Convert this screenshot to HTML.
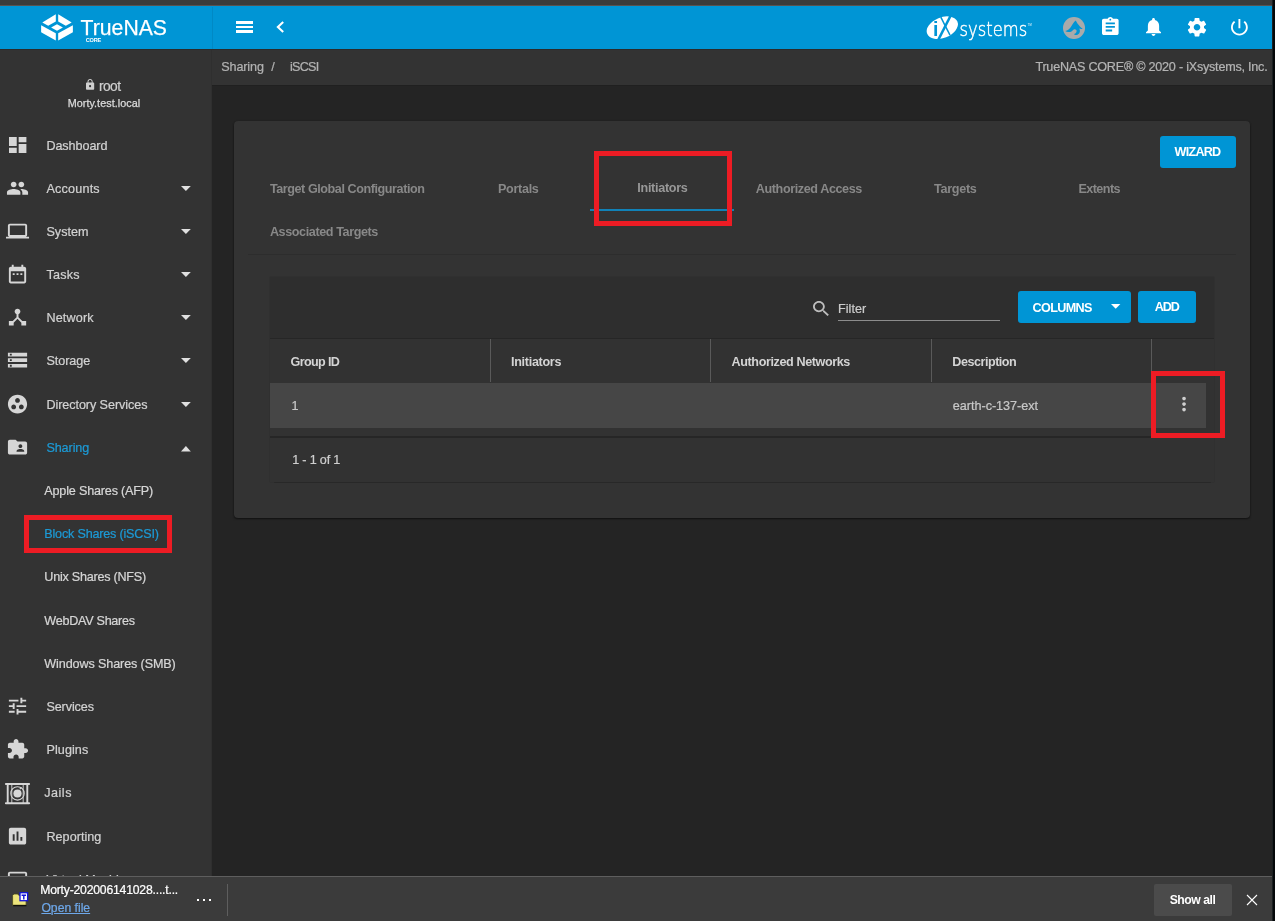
<!DOCTYPE html>
<html lang="en"><head><meta charset="utf-8"><title>TrueNAS - iSCSI Initiators</title>
<style>
html,body{margin:0;padding:0;}
body{width:1275px;height:921px;overflow:hidden;background:#242424;position:relative;font-family:"Liberation Sans",sans-serif;}
#app{position:absolute;left:0;top:0;width:1275px;height:921px;overflow:hidden;will-change:transform;}
header,nav,aside,main,footer{display:contents;}
.b{position:absolute;box-sizing:border-box;}
.t{position:absolute;white-space:nowrap;}
.i{position:absolute;display:block;overflow:visible;}
</style></head><body>
<div id="app">
<div class="b" style="left:0px;top:0px;width:1275px;height:921px;background:#242424;"></div>
<div class="b" style="left:212px;top:49px;width:1063px;height:36px;background:#333333;"></div>
<div class="b" style="left:0px;top:49px;width:212px;height:830px;background:#333333;"></div>
<div class="b" style="left:211px;top:49px;width:1px;height:827px;background:#2f2f2f;"></div>
<div class="b" style="left:212px;top:85px;width:1063px;height:1px;background:#202020;"></div>
<header aria-label="Top bar">
<div class="b" style="left:0px;top:0px;width:1275px;height:6px;background:#3b3b3b;"></div>
<div class="b" style="left:0px;top:5px;width:1275px;height:1px;background:#5a5250;"></div>
<div class="b" style="left:0px;top:6px;width:1275px;height:43px;background:#0095d5;"></div>
<div class="b" style="left:212px;top:7px;width:1px;height:42px;background:#0089c5;"></div>
<div class="b" style="left:0px;top:49px;width:1275px;height:1px;background:#2b2b2b;"></div>
<svg class="i" style="left:38px;top:10px" width="40" height="34" viewBox="38 10 40 34"><g fill="#fff"><polygon points="42.3,22.6 55.8,14.3 55.8,21.6 48.2,25.8"/><polygon points="58.2,14.3 71.7,22.6 65.8,25.8 58.2,21.6"/><polygon points="51.1,27.5 57,24.2 62.9,27.5 57,30.8"/><polygon points="41.1,25.2 55.8,33.3 55.8,40.6 41.1,32.2"/><polygon points="58.2,33.3 72.9,25.2 72.9,32.2 58.2,40.6"/></g></svg>
<svg class="i" style="left:78px;top:10px" width="100" height="38" viewBox="78 10 100 38"><text x="80.6" y="34.5" font-family="Liberation Sans, sans-serif" font-size="22.8" fill="#fff" stroke="#fff" stroke-width=".25" textLength="86.4" lengthAdjust="spacingAndGlyphs">TrueNAS</text><text x="85.8" y="42" font-family="Liberation Sans, sans-serif" font-weight="700" font-size="5.6" fill="#fff" textLength="15.4" lengthAdjust="spacing">CORE</text></svg>
<div class="b" style="left:236px;top:21.1px;width:17.1px;height:2.5px;background:#fff;"></div>
<div class="b" style="left:236px;top:26.05px;width:17.1px;height:2.05px;background:#fff;"></div>
<div class="b" style="left:236px;top:30.35px;width:17.1px;height:2.5px;background:#fff;"></div>
<svg class="i" style="left:274px;top:19px" width="14" height="16" viewBox="274 19 14 16"><path d="M283.2 22.1L277.9 27L283.2 31.9" fill="none" stroke="#fff" stroke-width="2.1"/></svg>
<svg class="i" style="left:920px;top:10px" width="120" height="36" viewBox="920 10 120 36"><ellipse cx="942.3" cy="27.700" rx="16.300" ry="10.300" transform="rotate(-22 942.3 27.700)" fill="#fff"/><path d="M950.600 15.800L938.400 39.600" stroke="#0095d5" stroke-width="2.500" fill="none"/><path d="M940.800 17.200L950.000 35.200" stroke="#0095d5" stroke-width="1.500" fill="none"/><text x="933.000" y="35.600" font-family="Liberation Sans, sans-serif" font-weight="700" font-size="19.5" fill="#0095d5">i</text><text x="959.600" y="35.600" font-family="DejaVu Sans Light, DejaVu Sans, sans-serif" font-weight="200" font-size="19.6" fill="#fff" stroke="#fff" stroke-width=".45" textLength="67.600" lengthAdjust="spacingAndGlyphs">systems</text><text x="1027.800" y="26.000" font-family="Liberation Sans, sans-serif" font-size="2.6" fill="#fff">TM</text></svg>
<svg class="i" style="left:1062px;top:16px" width="24" height="24" viewBox="0 0 24 24"><circle cx="12" cy="12" r="11" fill="#aaaaaa"/><path d="M3.200 14.900C5.500 14.600 7.800 12.600 9.500 9.900C10.600 8.200 12.000 5.800 13.900 4.600C14.600 6.300 15.200 7.300 16.100 8.300C17.000 9.600 18.600 11.600 20.700 12.700C19.600 13.200 18.400 13.100 17.200 12.600C17.900 13.800 18.100 15.000 17.700 16.200C17.300 17.600 16.200 18.700 14.400 19.000C13.400 19.100 12.500 18.600 11.900 17.900C12.600 17.800 13.300 17.500 13.800 16.900C14.600 16.200 14.900 15.100 14.300 14.100C13.700 13.100 12.500 13.000 11.700 13.500C10.900 14.200 10.300 14.900 9.500 15.400C8.500 15.900 7.300 16.100 6.200 16.000C5.100 15.900 4.000 15.500 3.200 14.900Z" fill="#0095d5"/></svg>
<svg class="i" style="left:1102.10px;top:17.30px;" width="16.60" height="18.00" viewBox="3 1 18 20" preserveAspectRatio="none"><path fill="#fff" d="M19 3h-4.18C14.4 1.84 13.3 1 12 1c-1.3 0-2.4.84-2.82 2H5c-1.1 0-2 .9-2 2v14c0 1.1.9 2 2 2h14c1.1 0 2-.9 2-2V5c0-1.1-.9-2-2-2zm-7 0c.55 0 1 .45 1 1s-.45 1-1 1-1-.45-1-1 .45-1 1-1zm2 14H7v-2h7v2zm3-4H7v-2h10v2zm0-4H7V7h10v2z"/></svg>
<svg class="i" style="left:1146.00px;top:18.20px;" width="15.00" height="17.90" viewBox="4 2.5 16 19.5" preserveAspectRatio="none"><path fill="#fff" d="M12 22c1.1 0 2-.9 2-2h-4c0 1.1.89 2 2 2zm6-6v-5c0-3.07-1.64-5.64-4.5-6.32V4c0-.83-.67-1.5-1.5-1.5s-1.5.67-1.5 1.5v.68C7.63 5.36 6 7.92 6 11v5l-2 2v1h16v-1l-2-2z"/></svg>
<svg class="i" style="left:1187.80px;top:17.80px;" width="18.00" height="18.40" viewBox="2.4 2 19.200000000000003 20" preserveAspectRatio="none"><path fill="#fff" d="M19.43 12.98c.04-.32.07-.64.07-.98s-.03-.66-.07-.98l2.11-1.65c.19-.15.24-.42.12-.64l-2-3.46c-.12-.22-.39-.3-.61-.22l-2.49 1c-.52-.4-1.08-.73-1.69-.98l-.38-2.65C14.46 2.18 14.25 2 14 2h-4c-.25 0-.46.18-.49.42l-.38 2.65c-.61.25-1.17.59-1.69.98l-2.49-1c-.23-.09-.49 0-.61.22l-2 3.46c-.13.22-.07.49.12.64l2.11 1.65c-.04.32-.07.65-.07.98s.03.66.07.98l-2.11 1.65c-.19.15-.24.42-.12.64l2 3.46c.12.22.39.3.61.22l2.49-1c.52.4 1.08.73 1.69.98l.38 2.65c.03.24.24.42.49.42h4c.25 0 .46-.18.49-.42l.38-2.65c.61-.25 1.17-.59 1.69-.98l2.49 1c.23.09.49 0 .61-.22l2-3.46c.12-.22.07-.49-.12-.64l-2.11-1.65zM12 15.5c-1.93 0-3.5-1.57-3.5-3.5s1.57-3.5 3.5-3.5 3.5 1.57 3.5 3.5-1.57 3.5-3.5 3.5z"/></svg>
<svg class="i" style="left:1231.40px;top:18.90px;" width="16.80" height="16.50" viewBox="3 3 18 18" preserveAspectRatio="none"><path fill="#fff" d="M13 3h-2v10h2V3zm4.83 2.17l-1.42 1.42C17.99 7.86 19 9.81 19 12c0 3.87-3.13 7-7 7s-7-3.13-7-7c0-2.19 1.01-4.14 2.58-5.42L6.17 5.17C4.23 6.82 3 9.26 3 12c0 4.97 4.03 9 9 9s9-4.03 9-9c0-2.74-1.23-5.18-3.17-6.83z"/></svg>
</header>
<nav aria-label="Breadcrumb">
<div class="t" style="left:221.20px;top:58px;font-size:12.6px;line-height:19px;color:#b2b2b2;font-weight:400;letter-spacing:-0.105px;-webkit-text-stroke:0.22px #b2b2b2;">Sharing</div>
<div class="t" style="left:271.20px;top:58px;font-size:12.6px;line-height:19px;color:#b2b2b2;font-weight:400;letter-spacing:0.000px;-webkit-text-stroke:0.22px #b2b2b2;">/</div>
<div class="t" style="left:289.90px;top:58px;font-size:12.6px;line-height:19px;color:#b2b2b2;font-weight:400;letter-spacing:-0.702px;-webkit-text-stroke:0.22px #b2b2b2;">iSCSI</div>
<div class="t" style="left:1035.40px;top:58px;font-size:12.6px;line-height:19px;color:#b4b4b4;font-weight:400;letter-spacing:-0.226px;-webkit-text-stroke:0.22px #b4b4b4;">TrueNAS CORE® © 2020 - iXsystems, Inc.</div>
</nav>
<aside aria-label="Navigation">
<svg class="i" style="left:85.90px;top:79.40px;" width="8.20" height="10.70" viewBox="4 1 16 21" preserveAspectRatio="none"><path fill="#d0d0d0" d="M18 8h-1V6c0-2.76-2.24-5-5-5S7 3.24 7 6v2H6c-1.1 0-2 .9-2 2v10c0 1.1.9 2 2 2h12c1.1 0 2-.9 2-2V10c0-1.1-.9-2-2-2zm-6 9c-1.1 0-2-.9-2-2s.9-2 2-2 2 .9 2 2-.9 2-2 2zm3.1-9H8.9V6c0-1.71 1.39-3.1 3.1-3.1 1.71 0 3.1 1.39 3.1 3.1v2z"/></svg>
<div class="t" style="left:98.90px;top:76px;font-size:13.8px;line-height:22px;color:#cfcfcf;font-weight:400;letter-spacing:-0.527px;-webkit-text-stroke:0.22px #cfcfcf;">root</div>
<div class="t" style="left:67.70px;top:95px;font-size:10.8px;line-height:16px;color:#dcdcdc;font-weight:400;letter-spacing:0.039px;-webkit-text-stroke:0.25px #dcdcdc;">Morty.test.local</div>
<div class="t" style="left:46.40px;top:137px;font-size:12.6px;line-height:19px;color:#d2d2d2;font-weight:400;letter-spacing:-0.068px;-webkit-text-stroke:0.22px #d2d2d2;">Dashboard</div>
<svg class="i" style="left:9.20px;top:136.90px;" width="17.40" height="16.00" viewBox="3 3 18 18" preserveAspectRatio="none"><path fill="#d6d6d6" d="M3 13h8V3H3v10zm0 8h8v-6H3v6zm10 0h8V11h-8v10zm0-18v6h8V3h-8z"/></svg>
<div class="t" style="left:46.40px;top:180px;font-size:12.6px;line-height:19px;color:#d2d2d2;font-weight:400;letter-spacing:0.210px;-webkit-text-stroke:0.22px #d2d2d2;">Accounts</div>
<svg class="i" style="left:5.88px;top:176.84px;" width="23.04" height="22.32" viewBox="0 0 24 24" preserveAspectRatio="none"><path fill="#d6d6d6" d="M16 11c1.66 0 2.99-1.34 2.99-3S17.66 5 16 5c-1.66 0-3 1.34-3 3s1.34 3 3 3zm-8 0c1.66 0 2.99-1.34 2.99-3S9.66 5 8 5C6.34 5 5 6.34 5 8s1.34 3 3 3zm0 2c-2.33 0-7 1.17-7 3.5V19h14v-2.5c0-2.33-4.67-3.5-7-3.5zm8 0c-.29 0-.62.02-.97.05 1.16.84 1.97 1.97 1.97 3.45V19h6v-2.5c0-2.33-4.67-3.5-7-3.5z"/></svg>
<svg class="i" style="left:181.10px;top:186.20px;" width="9.80" height="5.00" viewBox="7 10 10 5" preserveAspectRatio="none"><path fill="#e0e0e0" d="M7 10l5 5 5-5z"/></svg>
<div class="t" style="left:46.40px;top:223px;font-size:12.6px;line-height:19px;color:#d2d2d2;font-weight:400;letter-spacing:0.038px;-webkit-text-stroke:0.22px #d2d2d2;">System</div>
<svg class="i" style="left:5.88px;top:219.84px;" width="23.04" height="22.32" viewBox="0 0 24 24" preserveAspectRatio="none"><path fill="#d6d6d6" d="M20 18c1.1 0 1.99-.9 1.99-2L22 6c0-1.1-.9-2-2-2H4c-1.1 0-2 .9-2 2v10c0 1.1.9 2 2 2H0v2h24v-2h-4zM4 6h16v10H4V6z"/></svg>
<svg class="i" style="left:181.10px;top:229.20px;" width="9.80" height="5.00" viewBox="7 10 10 5" preserveAspectRatio="none"><path fill="#e0e0e0" d="M7 10l5 5 5-5z"/></svg>
<div class="t" style="left:46.40px;top:266px;font-size:12.6px;line-height:19px;color:#d2d2d2;font-weight:400;letter-spacing:0.248px;-webkit-text-stroke:0.22px #d2d2d2;">Tasks</div>
<svg class="i" style="left:5.88px;top:262.84px;" width="23.04" height="22.32" viewBox="0 0 24 24" preserveAspectRatio="none"><path fill="#d6d6d6" d="M9 11H7v2h2v-2zm4 0h-2v2h2v-2zm4 0h-2v2h2v-2zm2-7h-1V2h-2v2H8V2H6v2H5c-1.11 0-1.99.9-1.99 2L3 20c0 1.1.89 2 2 2h14c1.1 0 2-.9 2-2V6c0-1.1-.9-2-2-2zm0 16H5V9h14v11z"/></svg>
<svg class="i" style="left:181.10px;top:272.20px;" width="9.80" height="5.00" viewBox="7 10 10 5" preserveAspectRatio="none"><path fill="#e0e0e0" d="M7 10l5 5 5-5z"/></svg>
<div class="t" style="left:46.40px;top:309px;font-size:12.6px;line-height:19px;color:#d2d2d2;font-weight:400;letter-spacing:0.165px;-webkit-text-stroke:0.22px #d2d2d2;">Network</div>
<svg class="i" style="left:5.88px;top:305.84px;" width="23.04" height="22.32" viewBox="0 0 24 24" preserveAspectRatio="none"><path fill="#d6d6d6" d="M17 16l-4-4V8.82C14.16 8.4 15 7.3 15 6c0-1.66-1.34-3-3-3S9 4.34 9 6c0 1.3.84 2.4 2 2.82V12l-4 4H3v5h5v-3.05l4-4.2 4 4.2V21h5v-5h-4z"/></svg>
<svg class="i" style="left:181.10px;top:315.20px;" width="9.80" height="5.00" viewBox="7 10 10 5" preserveAspectRatio="none"><path fill="#e0e0e0" d="M7 10l5 5 5-5z"/></svg>
<div class="t" style="left:46.40px;top:352px;font-size:12.6px;line-height:19px;color:#d2d2d2;font-weight:400;letter-spacing:-0.039px;-webkit-text-stroke:0.22px #d2d2d2;">Storage</div>
<svg class="i" style="left:5.88px;top:348.84px;" width="23.04" height="22.32" viewBox="0 0 24 24" preserveAspectRatio="none"><path fill="#d6d6d6" d="M2 20h20v-4H2v4zm2-3h2v2H4v-2zM2 4v4h20V4H2zm4 3H4V5h2v2zm-4 7h20v-4H2v4zm2-3h2v2H4v-2z"/></svg>
<svg class="i" style="left:181.10px;top:358.20px;" width="9.80" height="5.00" viewBox="7 10 10 5" preserveAspectRatio="none"><path fill="#e0e0e0" d="M7 10l5 5 5-5z"/></svg>
<div class="t" style="left:46.40px;top:396px;font-size:12.6px;line-height:19px;color:#d2d2d2;font-weight:400;letter-spacing:-0.066px;-webkit-text-stroke:0.22px #d2d2d2;">Directory Services</div>
<svg class="i" style="left:5.88px;top:392.84px;" width="23.04" height="22.32" viewBox="0 0 24 24" preserveAspectRatio="none"><path fill="#d6d6d6" d="M12 2C6.48 2 2 6.48 2 12s4.48 10 10 10 10-4.48 10-10S17.52 2 12 2zM8 17.5c-1.38 0-2.5-1.12-2.5-2.5s1.12-2.5 2.5-2.5 2.5 1.12 2.5 2.5-1.12 2.5-2.5 2.5zM9.5 8c0-1.38 1.12-2.5 2.5-2.5s2.5 1.12 2.5 2.5-1.12 2.5-2.5 2.5S9.5 9.38 9.5 8zm6.5 9.5c-1.38 0-2.5-1.12-2.5-2.5s1.12-2.5 2.5-2.5 2.5 1.12 2.5 2.5-1.12 2.5-2.5 2.5z"/></svg>
<svg class="i" style="left:181.10px;top:402.20px;" width="9.80" height="5.00" viewBox="7 10 10 5" preserveAspectRatio="none"><path fill="#e0e0e0" d="M7 10l5 5 5-5z"/></svg>
<div class="t" style="left:46.40px;top:439px;font-size:12.6px;line-height:19px;color:#1c9ad6;font-weight:400;letter-spacing:-0.089px;-webkit-text-stroke:0.22px #1c9ad6;">Sharing</div>
<svg class="i" style="left:5.88px;top:435.84px;" width="23.04" height="22.32" viewBox="0 0 24 24" preserveAspectRatio="none"><path fill="#d6d6d6" d="M20 6h-8l-2-2H4c-1.1 0-1.99.9-1.99 2L2 18c0 1.1.9 2 2 2h16c1.1 0 2-.9 2-2V8c0-1.1-.9-2-2-2zm-5 3c1.1 0 2 .9 2 2s-.9 2-2 2-2-.9-2-2 .9-2 2-2zm4 8h-8v-1c0-1.33 2.67-2 4-2s4 .67 4 2v1z"/></svg>
<svg class="i" style="left:181.10px;top:445.80px;" width="9.80" height="5.40" viewBox="7 9 10 5" preserveAspectRatio="none"><path fill="#e0e0e0" d="M7 14l5-5 5 5z"/></svg>
<div class="t" style="left:44.30px;top:482px;font-size:12.6px;line-height:19px;color:#d6d6d6;font-weight:400;letter-spacing:-0.179px;-webkit-text-stroke:0.22px #d6d6d6;">Apple Shares (AFP)</div>
<div class="t" style="left:44.30px;top:525px;font-size:12.6px;line-height:19px;color:#1c9ad6;font-weight:400;letter-spacing:-0.192px;-webkit-text-stroke:0.22px #1c9ad6;">Block Shares (iSCSI)</div>
<div class="t" style="left:44.30px;top:568px;font-size:12.6px;line-height:19px;color:#d6d6d6;font-weight:400;letter-spacing:-0.239px;-webkit-text-stroke:0.22px #d6d6d6;">Unix Shares (NFS)</div>
<div class="t" style="left:44.30px;top:612px;font-size:12.6px;line-height:19px;color:#d6d6d6;font-weight:400;letter-spacing:-0.273px;-webkit-text-stroke:0.22px #d6d6d6;">WebDAV Shares</div>
<div class="t" style="left:44.30px;top:655px;font-size:12.6px;line-height:19px;color:#d6d6d6;font-weight:400;letter-spacing:-0.113px;-webkit-text-stroke:0.22px #d6d6d6;">Windows Shares (SMB)</div>
<div class="t" style="left:46.40px;top:698px;font-size:12.6px;line-height:19px;color:#d2d2d2;font-weight:400;letter-spacing:-0.102px;-webkit-text-stroke:0.22px #d2d2d2;">Services</div>
<svg class="i" style="left:5.88px;top:694.84px;" width="23.04" height="22.32" viewBox="0 0 24 24" preserveAspectRatio="none"><path fill="#d6d6d6" d="M3 17v2h6v-2H3zM3 5v2h10V5H3zm10 16v-2h8v-2h-8v-2h-2v6h2zM7 9v2H3v2h4v2h2V9H7zm14 4v-2H11v2h10zm-6-4h2V7h4V5h-4V3h-2v6z"/></svg>
<div class="t" style="left:46.40px;top:741px;font-size:12.6px;line-height:19px;color:#d2d2d2;font-weight:400;letter-spacing:0.095px;-webkit-text-stroke:0.22px #d2d2d2;">Plugins</div>
<svg class="i" style="left:5.88px;top:737.84px;" width="23.04" height="22.32" viewBox="0 0 24 24" preserveAspectRatio="none"><path fill="#d6d6d6" d="M20.5 11H19V7c0-1.1-.9-2-2-2h-4V3.5C13 2.12 11.88 1 10.5 1S8 2.12 8 3.5V5H4c-1.1 0-1.99.9-1.99 2v3.8H3.5c1.49 0 2.7 1.21 2.7 2.7s-1.21 2.7-2.7 2.7H2V20c0 1.1.9 2 2 2h3.8v-1.5c0-1.49 1.21-2.7 2.7-2.7 1.49 0 2.7 1.21 2.7 2.7V22H17c1.1 0 2-.9 2-2v-4h1.5c1.38 0 2.5-1.12 2.5-2.5S21.88 11 20.5 11z"/></svg>
<div class="t" style="left:44.20px;top:784px;font-size:12.6px;line-height:19px;color:#d2d2d2;font-weight:400;letter-spacing:0.523px;-webkit-text-stroke:0.22px #d2d2d2;">Jails</div>
<svg class="i" style="left:5.1px;top:782.7px" width="25" height="21.4" viewBox="0 0 25 21.4"><g fill="none" stroke="#d6d6d6"><path d="M.9 1.100H24.100M.9 20.200H24.100" stroke-width="2" stroke-linecap="round"/><path d="M2.700 1V20.400M22.300 1V20.400" stroke-width="1.9"/><path d="M6.800 1V20.400M18.200 1V20.400" stroke-width=".9"/><circle cx="12.5" cy="10.400" r="6.700" stroke-width="1.100"/><path d="M14.800 6.200L16.600 4.400" stroke-width="1.200"/></g><circle cx="12.5" cy="10.500" r="4.100" fill="#d6d6d6"/></svg>
<div class="t" style="left:46.40px;top:828px;font-size:12.6px;line-height:19px;color:#d2d2d2;font-weight:400;letter-spacing:0.046px;-webkit-text-stroke:0.22px #d2d2d2;">Reporting</div>
<svg class="i" style="left:5.88px;top:824.84px;" width="23.04" height="22.32" viewBox="0 0 24 24" preserveAspectRatio="none"><path fill="#d6d6d6" d="M19 3H5c-1.1 0-2 .9-2 2v14c0 1.1.9 2 2 2h14c1.1 0 2-.9 2-2V5c0-1.1-.9-2-2-2zM9 17H7v-7h2v7zm4 0h-2V7h2v10zm4 0h-2v-4h2v4z"/></svg>
<div class="t" style="left:46.40px;top:871px;font-size:12.6px;line-height:19px;color:#d2d2d2;font-weight:400;letter-spacing:-0.008px;-webkit-text-stroke:0.22px #d2d2d2;">Virtual Machines</div>
<svg class="i" style="left:5.88px;top:867.84px;" width="23.04" height="22.32" viewBox="0 0 24 24" preserveAspectRatio="none"><path fill="#d6d6d6" d="M20 18c1.1 0 2-.9 2-2V6c0-1.1-.9-2-2-2H4c-1.1 0-2 .9-2 2v10c0 1.1.9 2 2 2H0v2h24v-2h-4zM4 6h16v10H4V6z"/></svg>
<div class="b" style="left:24.1px;top:515.1px;width:138px;height:27.8px;border:5px solid #ed1c24;box-sizing:content-box"></div>
</aside>
<main>
<div class="b" style="left:234px;top:121px;width:1015.5px;height:397px;background:#333333;border-radius:4px;box-shadow:0 1.5px 2px -0.5px rgba(0,0,0,.5),0 0 1.5px rgba(0,0,0,.3);"></div>
<div class="b" style="left:1160.2px;top:136px;width:75.7px;height:31.8px;background:#0095d5;border-radius:3px;"></div>
<div class="t" style="left:1174.60px;top:143px;font-size:12.6px;line-height:19px;color:#fff;font-weight:700;letter-spacing:-0.758px;">WIZARD</div>
<div class="t" style="left:269.90px;top:180px;font-size:12.6px;line-height:19px;color:#888888;font-weight:700;letter-spacing:-0.433px;">Target Global Configuration</div>
<div class="t" style="left:498.00px;top:180px;font-size:12.6px;line-height:19px;color:#888888;font-weight:700;letter-spacing:-0.303px;">Portals</div>
<div class="t" style="left:637.30px;top:179px;font-size:12.6px;line-height:19px;color:#989898;font-weight:700;letter-spacing:-0.301px;">Initiators</div>
<div class="t" style="left:755.80px;top:180px;font-size:12.6px;line-height:19px;color:#888888;font-weight:700;letter-spacing:-0.398px;">Authorized Access</div>
<div class="t" style="left:934.00px;top:180px;font-size:12.6px;line-height:19px;color:#888888;font-weight:700;letter-spacing:-0.280px;">Targets</div>
<div class="t" style="left:1078.40px;top:180px;font-size:12.6px;line-height:19px;color:#888888;font-weight:700;letter-spacing:-0.553px;">Extents</div>
<div class="t" style="left:269.90px;top:223px;font-size:12.6px;line-height:19px;color:#888888;font-weight:700;letter-spacing:-0.401px;">Associated Targets</div>
<div class="b" style="left:590.2px;top:208.6px;width:144px;height:2px;background:#1182b8;"></div>
<div class="b" style="left:248.4px;top:254px;width:987.5px;height:1px;background:#2d2d2d;"></div>
<div class="b" style="left:594.2px;top:151.3px;width:127.8px;height:64.3px;border:5px solid #ed1c24;box-sizing:content-box"></div>
<div class="b" style="left:270px;top:277.4px;width:944px;height:204.6px;background:#323232;box-shadow:0 0 1px rgba(0,0,0,.25);"></div>
<div class="b" style="left:273.8px;top:481.8px;width:937px;height:1.3px;background:#282828;border-radius:1px;"></div>
<div class="b" style="left:270px;top:277.4px;width:944px;height:61px;background:#2e2e2e;"></div>
<div class="b" style="left:270px;top:338px;width:944px;height:1.2px;background:#262626;"></div>
<div class="b" style="left:270px;top:339.2px;width:944px;height:43.4px;background:#323232;"></div>
<div class="b" style="left:489.9px;top:339.4px;width:1px;height:43px;background:#5a5a5a;"></div>
<div class="b" style="left:710.1px;top:339.4px;width:1px;height:43px;background:#5a5a5a;"></div>
<div class="b" style="left:930.5px;top:339.4px;width:1px;height:43px;background:#5a5a5a;"></div>
<div class="b" style="left:1150.7px;top:339.4px;width:1px;height:43px;background:#5a5a5a;"></div>
<div class="b" style="left:270px;top:382.8px;width:936.2px;height:44.8px;background:#464646;"></div>
<div class="b" style="left:270px;top:436.4px;width:944px;height:1.2px;background:#262626;"></div>
<svg class="i" style="left:813.30px;top:301.40px;" width="15.90" height="15.00" viewBox="3 3 17.49 17.49" preserveAspectRatio="none"><path fill="#bdbdbd" d="M15.5 14h-.79l-.28-.27C15.41 12.59 16 11.11 16 9.5 16 5.91 13.09 3 9.5 3S3 5.91 3 9.5 5.91 16 9.5 16c1.61 0 3.09-.59 4.23-1.57l.27.28v.79l5 4.99L20.49 19l-4.99-5zm-6 0C7.01 14 5 11.99 5 9.5S7.01 5 9.5 5 14 7.01 14 9.5 11.99 14 9.5 14z"/></svg>
<div class="t" style="left:838.00px;top:300px;font-size:12.6px;line-height:19px;color:#cccccc;font-weight:400;letter-spacing:0.060px;-webkit-text-stroke:0.22px #cccccc;">Filter</div>
<div class="b" style="left:838.2px;top:320px;width:161.8px;height:1px;background:#8c8c8c;"></div>
<div class="b" style="left:1018.2px;top:291.2px;width:112.8px;height:31.6px;background:#0095d5;border-radius:3px;"></div>
<div class="t" style="left:1032.60px;top:299px;font-size:12.6px;line-height:19px;color:#fff;font-weight:700;letter-spacing:-0.633px;">COLUMNS</div>
<svg class="i" style="left:1110.80px;top:304.00px;" width="9.40" height="4.80" viewBox="7 10 10 5" preserveAspectRatio="none"><path fill="#fff" d="M7 10l5 5 5-5z"/></svg>
<div class="b" style="left:1138.3px;top:291.2px;width:57.7px;height:31.6px;background:#0095d5;border-radius:3px;"></div>
<div class="t" style="left:1154.80px;top:298px;font-size:12.6px;line-height:19px;color:#fff;font-weight:700;letter-spacing:-1.099px;">ADD</div>
<div class="t" style="left:290.60px;top:353px;font-size:12.6px;line-height:19px;color:#d4d4d4;font-weight:700;letter-spacing:-0.642px;">Group ID</div>
<div class="t" style="left:511.00px;top:353px;font-size:12.6px;line-height:19px;color:#d4d4d4;font-weight:700;letter-spacing:-0.301px;">Initiators</div>
<div class="t" style="left:731.60px;top:353px;font-size:12.6px;line-height:19px;color:#d4d4d4;font-weight:700;letter-spacing:-0.401px;">Authorized Networks</div>
<div class="t" style="left:952.30px;top:353px;font-size:12.6px;line-height:19px;color:#d4d4d4;font-weight:700;letter-spacing:-0.481px;">Description</div>
<div class="t" style="left:291.60px;top:397px;font-size:12.6px;line-height:19px;color:#c8c8c8;font-weight:400;letter-spacing:0.000px;-webkit-text-stroke:0.22px #c8c8c8;">1</div>
<div class="t" style="left:952.80px;top:397px;font-size:12.6px;line-height:19px;color:#c8c8c8;font-weight:400;letter-spacing:-0.010px;-webkit-text-stroke:0.22px #c8c8c8;">earth-c-137-ext</div>
<svg class="i" style="left:1173.16px;top:393.26px;" width="22.08" height="22.08" viewBox="0 0 24 24" preserveAspectRatio="none"><path fill="#cfcfcf" d="M12 8c1.1 0 2-.9 2-2s-.9-2-2-2-2 .9-2 2 .9 2 2 2zm0 2c-1.1 0-2 .9-2 2s.9 2 2 2 2-.9 2-2-.9-2-2-2zm0 6c-1.1 0-2 .9-2 2s.9 2 2 2 2-.9 2-2-.9-2-2-2z"/></svg>
<div class="t" style="left:292.20px;top:451px;font-size:12.6px;line-height:19px;color:#cfcfcf;font-weight:400;letter-spacing:-0.170px;-webkit-text-stroke:0.22px #cfcfcf;">1 - 1 of 1</div>
<div class="b" style="left:1151.1px;top:371.2px;width:64.2px;height:56.8px;border:5px solid #ed1c24;box-sizing:content-box"></div>
</main>
<footer aria-label="Downloads">
<div class="b" style="left:0px;top:876px;width:1275px;height:45px;background:#3b3b3b;"></div>
<div class="b" style="left:0px;top:876px;width:1275px;height:1px;background:#5e5e5e;"></div>
<svg class="i" style="left:10px;top:888px" width="22" height="20" viewBox="10 888 22 20"><path d="M12.600 905.200V895.400l1.300-1.400h3.800l1.200 1.400h7.200v9.800z" fill="#ece47c" stroke="#4a4718" stroke-width=".8"/><path d="M13.200 905.700h13.200" stroke="#050505" stroke-width="1.100"/><rect x="20.000" y="892.700" width="7.600" height="8.000" fill="#fff" stroke="#1212d8" stroke-width="1.300"/><path d="M21.600 894.500h4.400v1.400h-1.500v3.500h-1.400v-3.500h-1.500z" fill="#1212d8"/></svg>
<div class="t" style="left:40.20px;top:881px;font-size:12.2px;line-height:18px;color:#ffffff;font-weight:400;letter-spacing:-0.196px;-webkit-text-stroke:0.22px #ffffff;">Morty-202006141028....t...</div>
<div class="t" style="left:41.40px;top:899px;font-size:12.2px;line-height:18px;color:#6ea8ea;font-weight:400;letter-spacing:-0.004px;-webkit-text-stroke:0.22px #6ea8ea;text-decoration:underline;text-underline-offset:1px;text-decoration-thickness:1px;">Open file</div>
<div class="b" style="left:197.2px;top:899px;width:1.6px;height:1.6px;background:#ffffff;"></div>
<div class="b" style="left:203.2px;top:899px;width:1.6px;height:1.6px;background:#ffffff;"></div>
<div class="b" style="left:209.2px;top:899px;width:1.6px;height:1.6px;background:#ffffff;"></div>
<div class="b" style="left:227px;top:884px;width:1px;height:32px;background:#5e5e5e;"></div>
<div class="b" style="left:1154px;top:884px;width:78px;height:32px;background:#4b4b4b;border-radius:2px;"></div>
<div class="t" style="left:1169.70px;top:891px;font-size:12.2px;line-height:18px;color:#ffffff;font-weight:700;letter-spacing:-0.469px;">Show all</div>
<svg class="i" style="left:1245px;top:893px" width="14" height="14" viewBox="0 0 14 14"><path d="M2 2L12 12M12 2L2 12" stroke="#fff" stroke-width="1.1" fill="none"/></svg>
</footer>
<div class="b" style="left:1273px;top:0px;width:2px;height:921px;background:#05080a;"></div>
<div class="b" style="left:1272px;top:0px;width:1px;height:921px;background:#1b2022;"></div>
</div>
</body></html>
